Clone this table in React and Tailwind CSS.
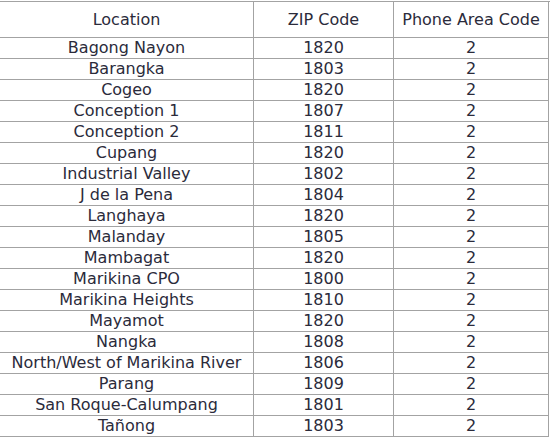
import React from "react";

const rows = [
  ["Bagong Nayon", "1820", "2"],
  ["Barangka", "1803", "2"],
  ["Cogeo", "1820", "2"],
  ["Conception 1", "1807", "2"],
  ["Conception 2", "1811", "2"],
  ["Cupang", "1820", "2"],
  ["Industrial Valley", "1802", "2"],
  ["J de la Pena", "1804", "2"],
  ["Langhaya", "1820", "2"],
  ["Malanday", "1805", "2"],
  ["Mambagat", "1820", "2"],
  ["Marikina CPO", "1800", "2"],
  ["Marikina Heights", "1810", "2"],
  ["Mayamot", "1820", "2"],
  ["Nangka", "1808", "2"],
  ["North/West of Marikina River", "1806", "2"],
  ["Parang", "1809", "2"],
  ["San Roque-Calumpang", "1801", "2"],
  ["Tañong", "1803", "2"],
];

export default function App() {
  return (
    <div className="bg-white w-[550px] h-[437px] pt-px" style={{ fontFamily: '"DejaVu Sans", Verdana, sans-serif' }}>
      <div className="grid grid-cols-[254px_140px_155px] text-[16px] text-[#2b2b3b] border-t border-[#a3a3a3]">
        {["Location", "ZIP Code", "Phone Area Code"].map((h) => (
          <div key={h} className="h-[36px] flex items-center justify-center border-r border-b border-[#a3a3a3]">
            {h}
          </div>
        ))}
        {rows.map((r) =>
          r.map((c, i) => (
            <div key={r[0] + i} className="h-[21px] flex items-center justify-center border-r border-b border-[#a3a3a3] leading-none whitespace-nowrap">
              {c}
            </div>
          ))
        )}
      </div>
    </div>
  );
}
